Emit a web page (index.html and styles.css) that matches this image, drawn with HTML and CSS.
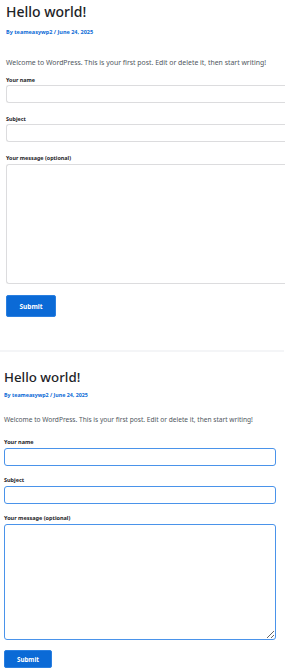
FILE: index.html
```html
<!DOCTYPE html>
<html lang="en">
<head>
    <meta charset="UTF-8">
    <meta name="viewport" content="width=device-width, initial-scale=1.0">
    <title>Hello world!</title>
    <link rel="stylesheet" href="styles.css">
</head>
<body>

    <article class="post post-wide">
        <h1 class="post-title">Hello world!</h1>
        <div class="post-meta">By teameasywp2 / June 24, 2025</div>
        <p class="post-text">Welcome to WordPress. This is your first post. Edit or delete it, then start writing!</p>
        <form class="contact-form">
            <label class="field-label">Your name</label>
            <input class="field-input" type="text">
            <label class="field-label">Subject</label>
            <input class="field-input" type="text">
            <label class="field-label">Your message (optional)</label>
            <textarea class="field-input field-area"></textarea>
            <button type="button" class="submit-btn">Submit</button>
        </form>
    </article>

    <hr class="divider">

    <article class="post post-narrow">
        <h1 class="post-title">Hello world!</h1>
        <div class="post-meta">By teameasywp2 / June 24, 2025</div>
        <p class="post-text">Welcome to WordPress. This is your first post. Edit or delete it, then start writing!</p>
        <form class="contact-form">
            <label class="field-label">Your name</label>
            <input class="field-input" type="text">
            <label class="field-label">Subject</label>
            <input class="field-input" type="text">
            <label class="field-label">Your message (optional)</label>
            <textarea class="field-input field-area"></textarea>
            <button type="button" class="submit-btn">Submit</button>
        </form>
    </article>

</body>
</html>
```

FILE: styles.css
```css
:root {
    --blue: #0b6ad6;
    --text: #1d2327;
    --muted: #50575e;
}

body {
    margin: 0;
    background: #fff;
    font-family: 'Noto Sans', 'Open Sans', sans-serif;
    color: var(--text);
}

.post { display: flex; flex-direction: column; }
.post-title { margin: 0; font-weight: 500; color: var(--text); }
.post-meta { color: var(--blue); font-weight: 700; }
.post-text { margin: 0; color: var(--muted); }

.contact-form { display: flex; flex-direction: column; align-items: flex-start; }
.field-label { display: block; font-weight: 700; color: var(--text); }

.field-input {
    box-sizing: border-box;
    display: block;
    margin: 0;
    padding: 0 6px;
    background: #fff;
    font-family: inherit;
    outline: none;
}
.field-area { resize: vertical; }

.submit-btn {
    box-sizing: border-box;
    border: 1px solid #2a7fe0;
    background: var(--blue);
    color: #fff;
    font-family: inherit;
    font-weight: 700;
    border-radius: 2px;
    padding: 0;
    cursor: pointer;
}

.divider {
    margin: 0;
    border: 0;
    height: 2px;
    width: 284px;
    background: #f4f5f7;
}

/* --- wide layout (top), fields run into the right edge --- */
.post-wide { padding: 2px 0 33px 6px; }
.post-wide .post-title { font-size: 14px; line-height: 20px; }
.post-wide .post-meta { margin-top: 5px; font-size: 5.5px; line-height: 10px; }
.post-wide .post-text { margin-top: 21px; font-size: 6.9px; line-height: 10px; }
.post-wide .contact-form { margin-top: 7px; }
.post-wide .field-label { font-size: 5.4px; line-height: 10px; }
.post-wide .field-input {
    width: 100%;
    height: 18px;
    border: 1px solid #dcdcde;
    border-right: 0;
    border-radius: 3px 0 0 3px;
    margin-bottom: 11px;
}
.post-wide .field-label + .field-area { margin-top: 1px; }
.post-wide .field-area { height: 120px; margin-bottom: 11px; resize: none; }
.post-wide .submit-btn { width: 50px; height: 22px; font-size: 6.5px; }

/* --- narrow layout (bottom) --- */
.post-narrow { padding: 16px 0 0 4px; }
.post-narrow .post-title { font-size: 13.3px; line-height: 18px; }
.post-narrow .post-meta { margin-top: 4px; font-size: 5.3px; line-height: 10px; }
.post-narrow .post-text { margin-top: 15px; font-size: 6.6px; line-height: 10px; }
.post-narrow .contact-form { margin-top: 12px; }
.post-narrow .field-label { font-size: 5.5px; line-height: 10px; }
.post-narrow .field-input {
    width: 272px;
    height: 18px;
    border: 1.5px solid #4a93ea;
    border-radius: 3px;
    margin-bottom: 9px;
}
.post-narrow .field-label + .field-input { margin-top: 1px; }
.post-narrow .field-area { height: 116px; margin-bottom: 10px; }
.post-narrow .submit-btn { width: 48px; height: 18px; font-size: 6.2px; }
```
